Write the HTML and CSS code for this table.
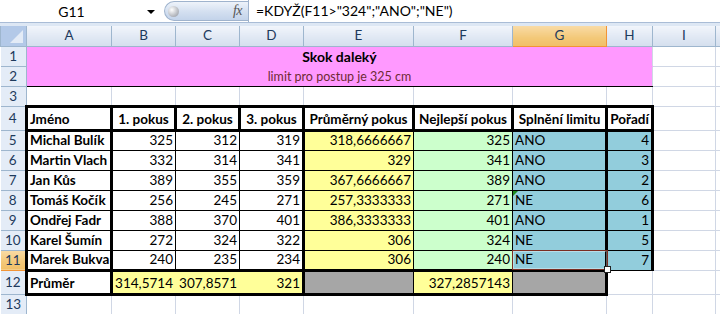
FILE: index.html
```html
<!DOCTYPE html>
<html lang="cs">
<head>
<meta charset="utf-8">
<title>Skok daleký</title>
<link rel="stylesheet" href="styles.css">
</head>
<body>
<div class="fbar">
  <div class="namebox">G11</div>
  <div class="nbarrow"></div>
  <div class="pill"><span class="knob"></span><span class="fx">fx</span></div>
  <div class="formula">=KDYŽ(F11&gt;"324";"ANO";"NE")</div>
</div>
<div class="band"></div>
<table class="sheet">
  <colgroup>
    <col class="c-rh"><col class="c-a"><col class="c-b"><col class="c-c"><col class="c-d"><col class="c-e"><col class="c-f"><col class="c-g"><col class="c-h"><col class="c-i"><col class="c-j">
  </colgroup>
  <tr class="hdr">
    <th class="corner"><span class="tri"></span></th>
    <th>A</th><th>B</th><th>C</th><th>D</th><th>E</th><th>F</th><th class="hsel">G</th><th>H</th><th>I</th><th></th>
  </tr>
  <tr>
    <th class="rh">1</th>
    <td colspan="8" class="pink title">Skok daleký</td>
    <td></td><td></td>
  </tr>
  <tr>
    <th class="rh">2</th>
    <td colspan="8" class="pink sub">limit pro postup je 325 cm</td>
    <td></td><td></td>
  </tr>
  <tr>
    <th class="rh">3</th>
    <td></td><td></td><td></td><td></td><td></td><td></td><td></td><td></td><td></td><td></td>
  </tr>
  <tr class="tall">
    <th class="rh">4</th>
    <td class="hd bold">Jméno</td>
    <td class="hd bold ctr">1. pokus</td>
    <td class="hd bold ctr">2. pokus</td>
    <td class="hd bold ctr">3. pokus</td>
    <td class="hd bold ctr">Průměrný pokus</td>
    <td class="hd bold ctr">Nejlepší pokus</td>
    <td class="hd bold ctr">Splnění limitu</td>
    <td class="hd bold ctr">Pořadí</td>
    <td></td><td></td>
  </tr>
  <tr>
    <th class="rh">5</th>
    <td class="d bold tk">Michal Bulík</td>
    <td class="d num tl">325</td><td class="d num">312</td><td class="d num tr">319</td>
    <td class="d num yel tl">318,6666667</td><td class="d num grn">325</td><td class="d blu tr">ANO</td>
    <td class="d num blu tk">4</td>
    <td></td><td></td>
  </tr>
  <tr>
    <th class="rh">6</th>
    <td class="d bold tk">Martin Vlach</td>
    <td class="d num tl">332</td><td class="d num">314</td><td class="d num tr">341</td>
    <td class="d num yel tl">329</td><td class="d num grn">341</td><td class="d blu tr">ANO</td>
    <td class="d num blu tk">3</td>
    <td></td><td></td>
  </tr>
  <tr>
    <th class="rh">7</th>
    <td class="d bold tk">Jan Kůs</td>
    <td class="d num tl">389</td><td class="d num">355</td><td class="d num tr">359</td>
    <td class="d num yel tl">367,6666667</td><td class="d num grn">389</td><td class="d blu tr">ANO</td>
    <td class="d num blu tk">2</td>
    <td></td><td></td>
  </tr>
  <tr>
    <th class="rh">8</th>
    <td class="d bold tk">Tomáš Kočík</td>
    <td class="d num tl">256</td><td class="d num">245</td><td class="d num tr">271</td>
    <td class="d num yel tl">257,3333333</td><td class="d num grn">271</td><td class="d blu tr warn">NE</td>
    <td class="d num blu tk">6</td>
    <td></td><td></td>
  </tr>
  <tr>
    <th class="rh">9</th>
    <td class="d bold tk">Ondřej Fadr</td>
    <td class="d num tl">388</td><td class="d num">370</td><td class="d num tr">401</td>
    <td class="d num yel tl">386,3333333</td><td class="d num grn">401</td><td class="d blu tr">ANO</td>
    <td class="d num blu tk">1</td>
    <td></td><td></td>
  </tr>
  <tr>
    <th class="rh">10</th>
    <td class="d bold tk">Karel Šumín</td>
    <td class="d num tl">272</td><td class="d num">324</td><td class="d num tr">322</td>
    <td class="d num yel tl">306</td><td class="d num grn">324</td><td class="d blu tr">NE</td>
    <td class="d num blu tk">5</td>
    <td></td><td></td>
  </tr>
  <tr>
    <th class="rh rsel">11</th>
    <td class="d bold tk">Marek Bukva</td>
    <td class="d num tl">240</td><td class="d num">235</td><td class="d num tr">234</td>
    <td class="d num yel tl">306</td><td class="d num grn">240</td><td class="d blu tr sel">NE<span class="handle"></span></td>
    <td class="d num blu tk">7</td>
    <td></td><td></td>
  </tr>
  <tr class="tall">
    <th class="rh">12</th>
    <td class="d bold tk tt tb">Průměr</td>
    <td class="d num yel yb tl tt tb">314,5714</td><td class="d num yel yb tt tb">307,8571</td><td class="d num yel yb tr tt tb">321</td>
    <td class="d gry tl tt tb"></td><td class="d num yel tt tb">327,2857143</td><td class="d gry tr tt tb"></td>
    <td></td>
    <td></td><td></td>
  </tr>
  <tr>
    <th class="rh">13</th>
    <td></td><td></td><td></td><td></td><td></td><td></td><td></td><td></td><td></td><td></td>
  </tr>
</table>
</body>
</html>
```

FILE: styles.css
```css
html, body {
  margin: 0;
  padding: 0;
  background: #ffffff;
  overflow: hidden;
}
body {
  width: 720px;
  height: 314px;
  font-family: Lato, "Noto Sans", sans-serif;
  font-size: 13.5px;
  color: #000;
}

/* formula bar */
.fbar {
  display: flex;
  align-items: center;
  height: 22px;
  background: #ffffff;
  border-bottom: 1px solid #a9bcd6;
}
.namebox {
  width: 143px;
  text-align: center;
  font-size: 14px;
}
.nbarrow {
  width: 0;
  height: 0;
  margin: 2px 6px 0 4px;
  border-left: 4px solid transparent;
  border-right: 4px solid transparent;
  border-top: 4px solid #000;
}
.pill {
  margin-left: 3px;
  width: 84px;
  height: 20px;
  box-sizing: border-box;
  border: 1px solid #9fb3cd;
  border-right: none;
  border-radius: 10px 0 0 10px;
  background: linear-gradient(#eef3fa, #d3dff0 55%, #c3d3ea);
  display: flex;
  align-items: center;
  justify-content: space-between;
  padding: 0 6px 0 3px;
}
.knob {
  width: 11px;
  height: 11px;
  border-radius: 50%;
  background: radial-gradient(circle at 35% 35%, #ffffff, #b9bcc2 60%, #8e939b);
}
.fx {
  font-family: "Liberation Serif", "DejaVu Serif", serif;
  font-style: italic;
  font-size: 14px;
  color: #555;
  letter-spacing: -0.5px;
}
.formula {
  flex: 1;
  height: 22px;
  line-height: 22px;
  border-left: 1px solid #9fb3cd;
  padding-left: 7px;
  font-size: 14px;
  white-space: nowrap;
}
.band {
  height: 3px;
  background: #dde7f4;
}

/* sheet */
.sheet {
  border-collapse: collapse;
  table-layout: fixed;
  width: 720px;
}
.c-rh { width: 26px; }
.c-a { width: 85px; }
.c-b, .c-c, .c-d { width: 64px; }
.c-e { width: 110px; }
.c-f { width: 99px; }
.c-g { width: 94px; }
.c-h { width: 46px; }
.c-i { width: 63px; }
.c-j { width: 5px; }

.sheet tr { height: 20px; }
.sheet tr.tall { height: 24px; }

.sheet td {
  border: 1px solid #d0d7e5;
  padding: 0 2px 1px 2px;
  vertical-align: bottom;
  white-space: nowrap;
  overflow: hidden;
  line-height: 17px;
}

.hdr th {
  height: 19px;
  font-weight: normal;
  font-size: 13.5px;
  color: #1e3a5c;
  background: linear-gradient(#f1f5fb, #dfe7f3 60%, #d5dfee);
  border: 1px solid #9eb6ce;
  border-top: none;
  padding: 0;
  line-height: 17px;
}
.hdr th.hsel {
  background: linear-gradient(#f9dba6, #f3c878 60%, #f1bf68);
  border: 1px solid #f29436;
  border-top: none;
}
.hdr th.corner {
  background: #b3c9e8;
  position: relative;
  border-color: #9eb6ce;
}
.tri {
  position: absolute;
  right: 3px;
  bottom: 3px;
  width: 0;
  height: 0;
  border-left: 13px solid transparent;
  border-bottom: 13px solid #e3ebf6;
}
th.rh {
  font-weight: normal;
  font-size: 13.5px;
  color: #1e3a5c;
  background: #e4ecf7;
  border: 1px solid #9eb6ce;
  border-left: none;
  padding: 0;
  text-align: center;
  line-height: 17px;
}
th.rsel {
  background: linear-gradient(#f9dba6, #f3c878 60%, #f1bf68);
  border-color: #f29436;
}

/* content */
.pink {
  background: #ff99ff;
  text-align: center;
  border-left: 1px solid #000;
  border-right: 1px solid #000;
}
.sheet td.title {
  font-weight: bold;
  font-size: 14px;
  border-top-color: #000;
  border-bottom-color: #ff99ff;
}
.sheet td.sub {
  font-size: 12.5px;
  color: #6e2a33;
  border-bottom: 1px solid #000;
  border-top-color: #ff99ff;
}
.sheet td.d { border: 1px solid #000; }
.sheet td.hd { border: 3px solid #000; }
.bold { font-weight: bold; }
.ctr { text-align: center; }
.num { text-align: right; }
.yel { background: #ffff99; }
.grn { background: #ccffcc; }
.blu { background: #92cddc; }
.gry { background: #a6a6a6; }

.sheet td.tk { border-left: 3px solid #000; border-right: 3px solid #000; }
.sheet td.tl { border-left: 3px solid #000; }
.sheet td.tr { border-right: 3px solid #000; }
.sheet td.tt { border-top: 3px solid #000; }
.sheet td.tb { border-bottom: 3px solid #000; }
.sheet td.yb { border-left-color: #ffff99; border-right-color: #ffff99; }
.sheet td.yb.tl { border-left-color: #000; }
.sheet td.yb.tr { border-right-color: #000; }

.sheet td.warn { position: relative; }
.sheet td.warn::before {
  content: "";
  position: absolute;
  left: 0;
  top: 0;
  border-top: 5px solid #1f8a1f;
  border-right: 5px solid transparent;
}
.sheet td.sel { position: relative; overflow: visible; }
.sheet td.sel::after {
  content: "";
  position: absolute;
  left: -1px;
  top: -1px;
  right: -3px;
  bottom: -1px;
  border: 1px solid #7a2e22;
  box-shadow: inset 0 0 0 1px rgba(255, 255, 255, 0.35);
}
.handle {
  position: absolute;
  right: -6px;
  bottom: -4px;
  width: 5px;
  height: 5px;
  background: #fff;
  border: 1px solid #222;
  z-index: 2;
}
```
